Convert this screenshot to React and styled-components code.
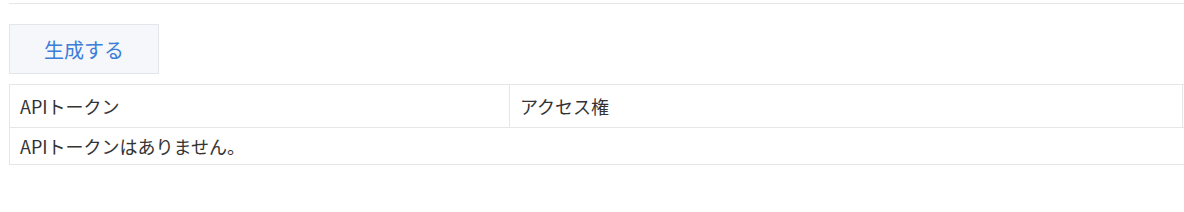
import React from "react";
import styled, { createGlobalStyle } from "styled-components";

const Global = createGlobalStyle`
  html, body { margin: 0; padding: 0; background: #fff; overflow: hidden; }
  body { font-family: "Noto Sans CJK JP", "Noto Sans", sans-serif; color: #333; }
`;

const Page = styled.div`
  padding-left: 9px;
  width: 1400px;
`;

const TopBar = styled.div`
  height: 3px;
  border-bottom: 1px solid #e6e6e6;
`;

const Toolbar = styled.div`
  display: flex;
  padding: 20px 0 10px;
`;

const Button = styled.button`
  width: 150px;
  height: 50px;
  box-sizing: border-box;
  border: 1px solid #e2e5ea;
  background: #f5f7fa;
  color: #3b7ed8;
  font-family: "Noto Sans CJK JP", sans-serif;
  font-size: 20px;
  cursor: pointer;
  padding: 0;
`;

const Table = styled.table`
  border-collapse: collapse;
  table-layout: fixed;
  width: 1300px;
  font-size: 18px;
  color: #333;
`;

const Th = styled.th`
  border: 1px solid #e6e6e6;
  height: 43px;
  padding: 0 10px;
  text-align: left;
  font-weight: normal;
  width: ${(p) => p.$w || "auto"};
  box-sizing: border-box;
`;

const Td = styled.td`
  border: 1px solid #e6e6e6;
  height: 37px;
  padding: 0 10px;
  text-align: left;
  box-sizing: border-box;
`;

export default function App() {
  return (
    <Page>
      <Global />
      <TopBar />
      <Toolbar>
        <Button>生成する</Button>
      </Toolbar>
      <Table>
        <thead>
          <tr>
            <Th $w="500px">APIトークン</Th>
            <Th $w="673px">アクセス権</Th>
            <Th></Th>
          </tr>
        </thead>
        <tbody>
          <tr>
            <Td colSpan={3}>APIトークンはありません。</Td>
          </tr>
        </tbody>
      </Table>
    </Page>
  );
}
